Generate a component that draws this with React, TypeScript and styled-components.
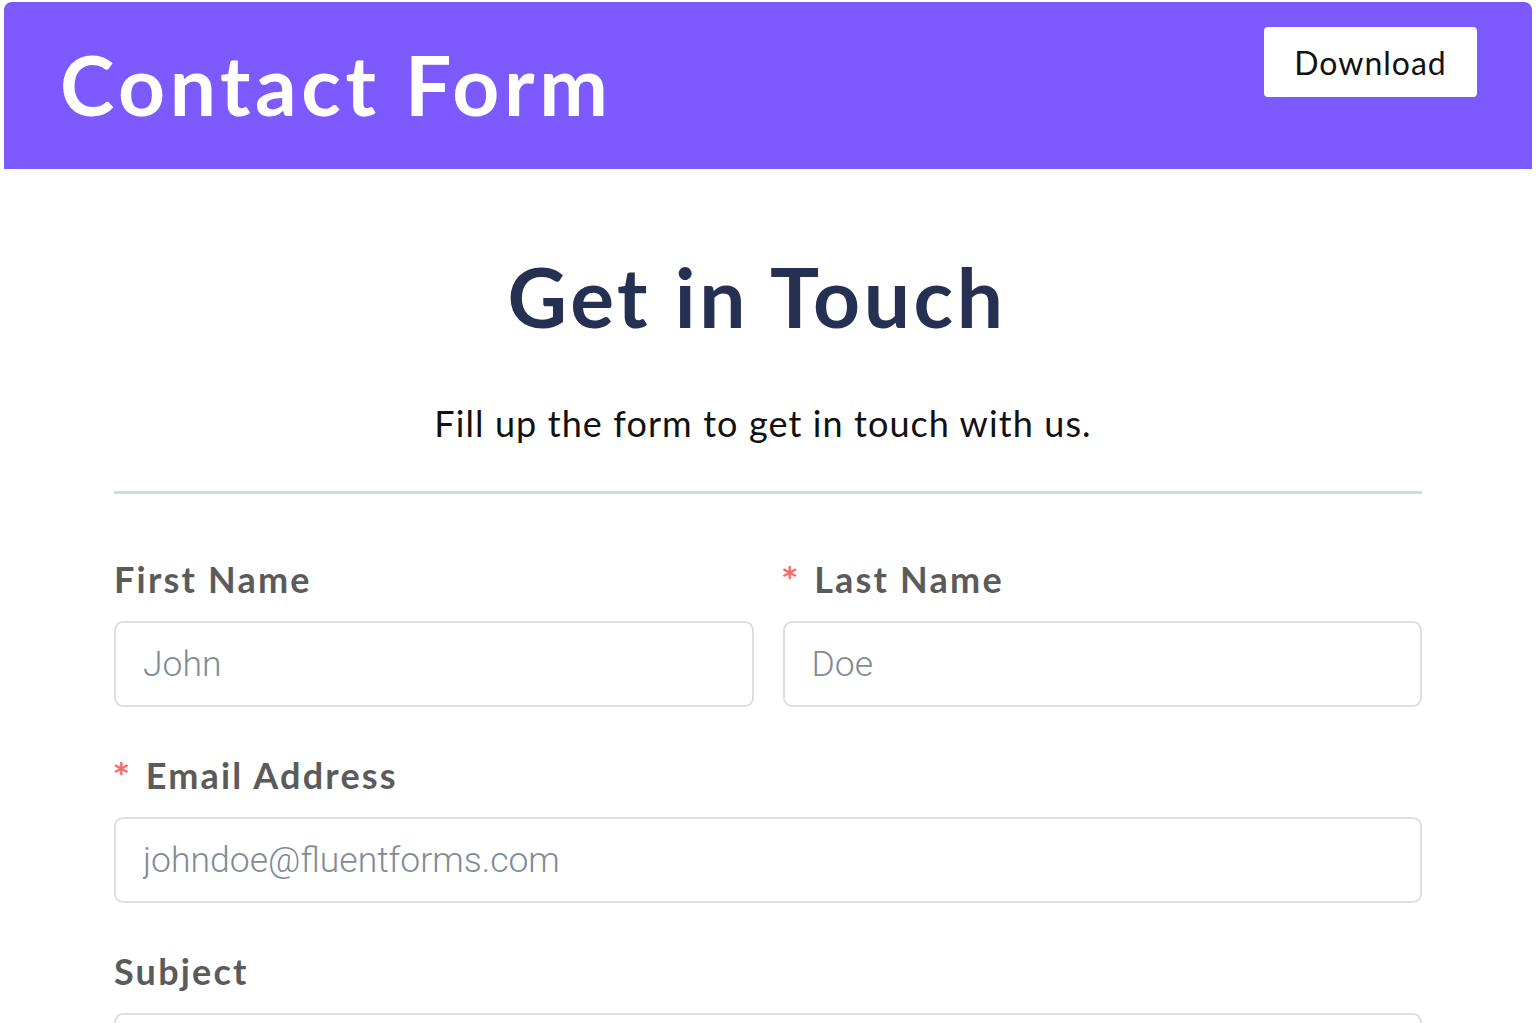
import React from "react";
import styled, { createGlobalStyle } from "styled-components";

const GlobalStyle = createGlobalStyle`
  body {
    margin: 0;
    background: #ffffff;
    font-family: "Lato", "Open Sans", sans-serif;
  }
`;

const Page = styled.div`
  padding: 2px 4px 0 4px;
  height: 1021px;
  overflow: hidden;
`;

const Header = styled.header`
  display: flex;
  justify-content: space-between;
  align-items: center;
  height: 167px;
  padding: 0 55px 0 56px;
  background: #7c5aff;
  border-radius: 8px 8px 0 0;
`;

const Title = styled.h1`
  margin: -4px 0 0;
  font-size: 82px;
  font-weight: 700;
  color: #ffffff;
  letter-spacing: 4.6px;
`;

const DownloadButton = styled.button`
  align-self: flex-start;
  margin-top: 25px;
  width: 213px;
  height: 70px;
  border: none;
  border-radius: 4px;
  background: #ffffff;
  color: #111111;
  font-family: "Lato", sans-serif;
  font-size: 32px;
  letter-spacing: 1px;
  font-weight: 400;
`;

const Main = styled.main`
  width: 1308px;
  margin: 0 auto;
  padding-top: 77px;
`;

const Heading = styled.h2`
  margin: 0;
  padding-right: 22px;
  text-align: center;
  font-size: 82px;
  line-height: 100px;
  font-weight: 700;
  letter-spacing: 3.6px;
  color: #253053;
`;

const Subtitle = styled.p`
  margin: 55px 0 0;
  padding-right: 10px;
  text-align: center;
  font-size: 36px;
  line-height: 44px;
  letter-spacing: 1.1px;
  color: #111111;
`;

const Divider = styled.hr`
  margin: 46px 0 0;
  border: none;
  height: 3px;
  background: #cddbe6;
`;

const Row = styled.div<{ $cols: number; $first?: boolean }>`
  display: grid;
  grid-template-columns: repeat(${(p) => p.$cols}, 1fr);
  column-gap: 29px;
  margin-top: ${(p) => (p.$first ? "63px" : "46px")};
`;

const Field = styled.div`
  display: flex;
  flex-direction: column;
`;

const Label = styled.label`
  display: flex;
  align-items: center;
  gap: 17px;
  height: 44px;
  font-size: 36px;
  font-weight: 700;
  letter-spacing: 2.2px;
  color: #5b5b5b;
`;

const Star = styled.span`
  color: #f56c6c;
  font-family: "DejaVu Sans", sans-serif;
  font-size: 28px;
  font-weight: 700;
  letter-spacing: 0;
  margin-top: -3px;
`;

const Input = styled.input`
  margin-top: 20px;
  height: 86px;
  box-sizing: border-box;
  padding: 0 27px;
  border: 2px solid #dedede;
  border-radius: 9px;
  background: #ffffff;
  font-family: "Roboto", sans-serif;
  font-size: 35.5px;
  font-weight: 300;
  color: #333;
  &::placeholder {
    color: #7f8c96;
  }
`;

const FormField = ({
  label,
  placeholder,
  required,
}: {
  label: string;
  placeholder?: string;
  required?: boolean;
}) => (
  <Field>
    <Label>
      {required && <Star>*</Star>}
      {label}
    </Label>
    <Input placeholder={placeholder} />
  </Field>
);

export default function App() {
  return (
    <>
      <GlobalStyle />
      <Page>
        <Header>
          <Title>Contact Form</Title>
          <DownloadButton>Download</DownloadButton>
        </Header>
        <Main>
          <Heading>Get in Touch</Heading>
          <Subtitle>Fill up the form to get in touch with us.</Subtitle>
          <Divider />
          <Row $cols={2} $first>
            <FormField label="First Name" placeholder="John" />
            <FormField label="Last Name" placeholder="Doe" required />
          </Row>
          <Row $cols={1}>
            <FormField
              label="Email Address"
              placeholder="johndoe@fluentforms.com"
              required
            />
          </Row>
          <Row $cols={1}>
            <FormField label="Subject" />
          </Row>
        </Main>
      </Page>
    </>
  );
}
